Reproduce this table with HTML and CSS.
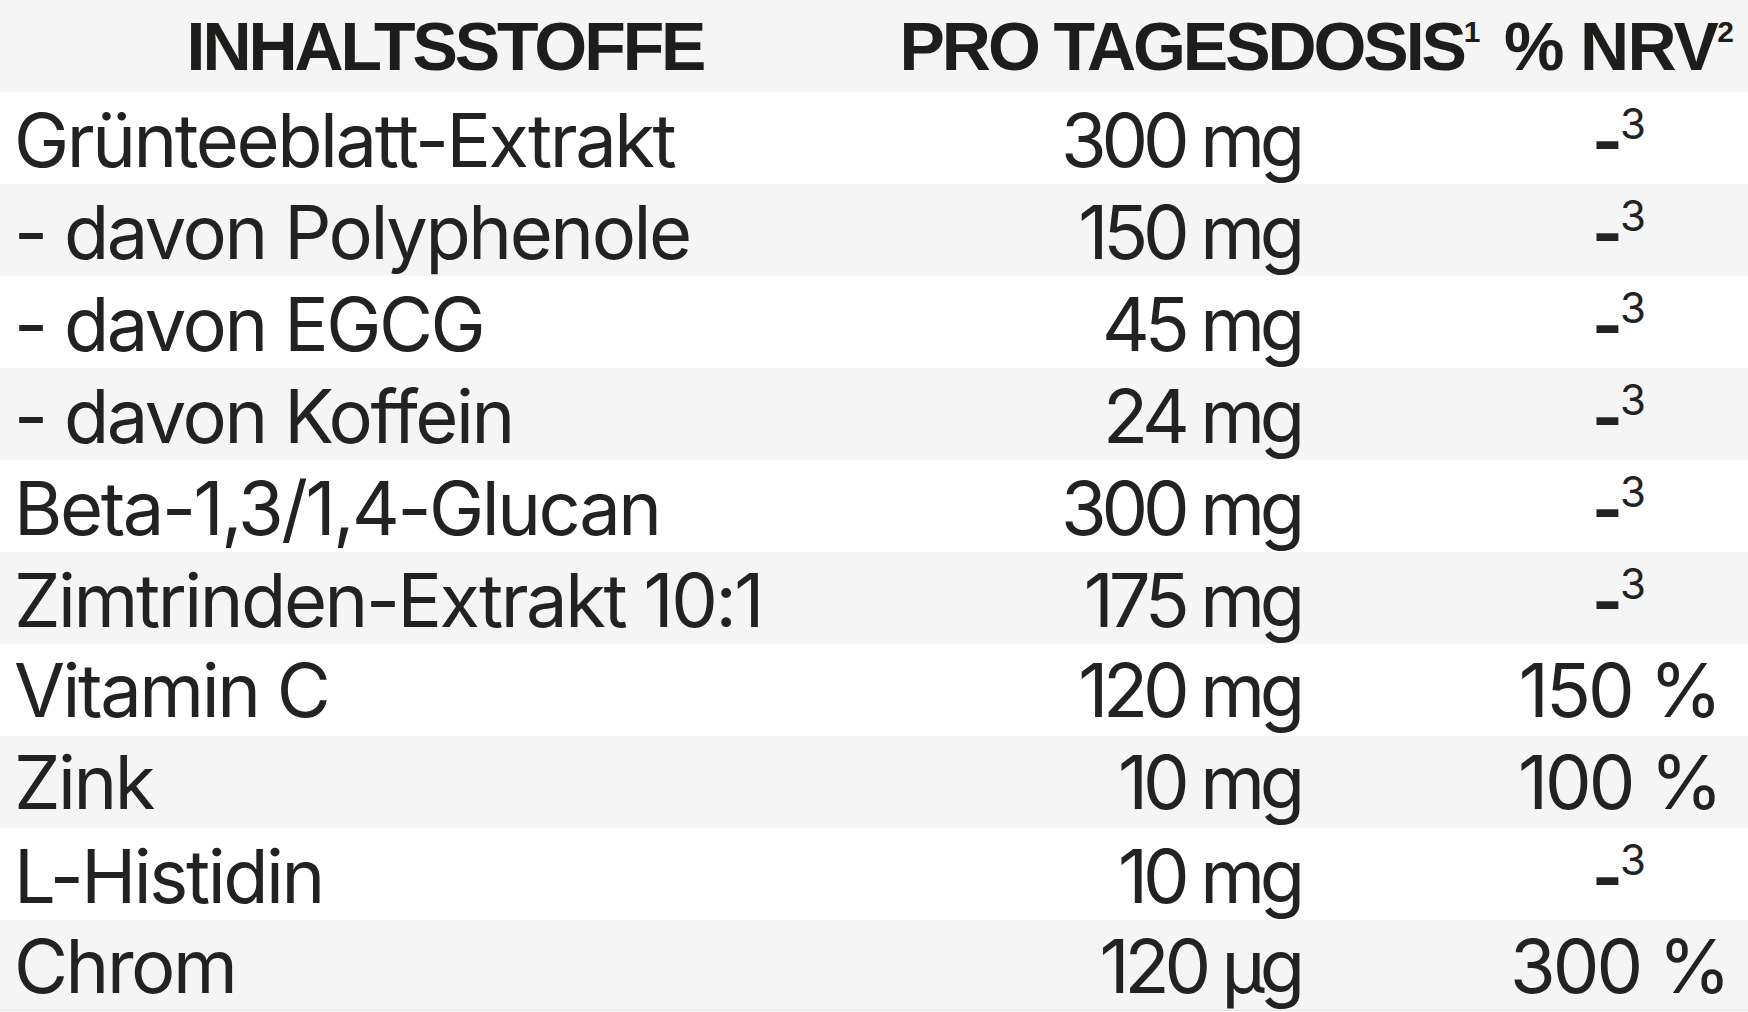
FILE: index.html
```html
<!DOCTYPE html>
<html lang="de">
<head>
<meta charset="utf-8">
<title>Inhaltsstoffe</title>
<link rel="stylesheet" href="styles.css">
</head>
<body>
<div class="table">
  <div class="row head">
    <div class="c1">INHALTSSTOFFE</div>
    <div class="c2">PRO TAGESDOSIS<sup class="hs">1</sup></div>
    <div class="c3">% NRV<sup class="hs">2</sup></div>
  </div>
  <div class="row">
    <div class="c1">Grünteeblatt-Extrakt</div>
    <div class="c2">300 mg</div>
    <div class="c3"><span class="dash">-</span><sup class="bs">3</sup></div>
  </div>
  <div class="row alt">
    <div class="c1">- davon Polyphenole</div>
    <div class="c2">150 mg</div>
    <div class="c3"><span class="dash">-</span><sup class="bs">3</sup></div>
  </div>
  <div class="row">
    <div class="c1">- davon EGCG</div>
    <div class="c2">45 mg</div>
    <div class="c3"><span class="dash">-</span><sup class="bs">3</sup></div>
  </div>
  <div class="row alt">
    <div class="c1">- davon Koffein</div>
    <div class="c2">24 mg</div>
    <div class="c3"><span class="dash">-</span><sup class="bs">3</sup></div>
  </div>
  <div class="row">
    <div class="c1">Beta-1,3/1,4-Glucan</div>
    <div class="c2">300 mg</div>
    <div class="c3"><span class="dash">-</span><sup class="bs">3</sup></div>
  </div>
  <div class="row alt">
    <div class="c1">Zimtrinden-Extrakt 10:1</div>
    <div class="c2">175 mg</div>
    <div class="c3"><span class="dash">-</span><sup class="bs">3</sup></div>
  </div>
  <div class="row">
    <div class="c1">Vitamin C</div>
    <div class="c2">120 mg</div>
    <div class="c3">150 %</div>
  </div>
  <div class="row alt">
    <div class="c1">Zink</div>
    <div class="c2">10 mg</div>
    <div class="c3">100 %</div>
  </div>
  <div class="row">
    <div class="c1">L-Histidin</div>
    <div class="c2">10 mg</div>
    <div class="c3"><span class="dash">-</span><sup class="bs">3</sup></div>
  </div>
  <div class="row alt last">
    <div class="c1">Chrom</div>
    <div class="c2">120 µg</div>
    <div class="c3">300 %</div>
  </div>
</div>
</body>
</html>
```

FILE: styles.css
```css
html, body {
  margin: 0;
  padding: 0;
  background: #ffffff;
}

.table {
  width: 1748px;
  display: flex;
  flex-direction: column;
  font-family: Inter, "Noto Sans", sans-serif;
  color: #222222;
}

.row {
  display: grid;
  grid-template-columns: 890px 600px 258px;
  height: 92px;
  align-items: center;
  font-size: 74px;
  line-height: 92px;
  white-space: nowrap;
  background: #ffffff;
}

.row.alt {
  background: #f5f5f5;
}

.row.last {
  height: 90px;
  border-bottom: 1px solid #e4e4e4;
}

.row.head {
  background: #f5f5f5;
  font-family: "Liberation Sans", Arial, sans-serif;
  font-weight: 700;
  font-size: 68px;
  color: #1d1d1b;
  letter-spacing: -0.045em;
}

.c1 {
  padding-left: 14px;
  letter-spacing: -0.033em;
}

.c2 {
  text-align: right;
  padding-right: 190px;
  letter-spacing: -0.07em;
}

.c3 {
  text-align: center;
  letter-spacing: -0.04em;
}

.head .c1,
.head .c2 {
  text-align: center;
  padding: 0;
  letter-spacing: -0.045em;
}

.head .c3 {
  letter-spacing: -0.025em;
}

.hs {
  font-size: 30px;
  line-height: 0;
  vertical-align: 28px;
  letter-spacing: 0;
}

.dash {
  font-weight: 700;
  font-size: 66px;
}

.bs {
  font-size: 42px;
  line-height: 0;
  vertical-align: 26px;
  letter-spacing: 0;
}
```
